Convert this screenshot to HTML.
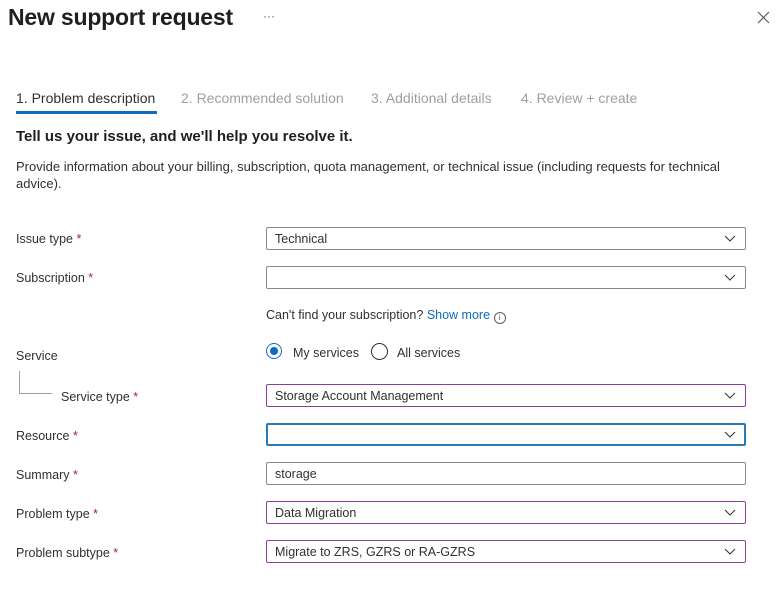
<!DOCTYPE html>
<html><head><style>
body{margin:0;width:783px;height:589px;background:#fff;font-family:"Liberation Sans",sans-serif;color:#323130;position:relative;overflow:hidden}
.a{position:absolute;white-space:nowrap}
.lbl{font-size:12.5px;color:#323130}
.req{color:#a4262c}
.box{position:absolute;left:266px;height:21px;border:1px solid #8a8886;border-radius:2px;font-size:12.5px;line-height:22px;padding-left:8px;box-sizing:content-box;width:470px}
.purple{border-color:#8a3d9a}
.blue{border:2px solid #2b79b5;height:19px;line-height:20px;width:469px;padding-left:7px}
.chev{position:absolute;right:9px;top:7px}
</style></head><body>
<div class="a" style="left:8px;top:4px;font-size:23px;font-weight:bold;color:#201f1e;letter-spacing:-0.2px">New support request</div>
<div class="a" style="left:263px;top:9px;font-size:12px;color:#605e5c">···</div>
<svg class="a" style="left:757px;top:11px" width="13" height="13"><path d="M1 1L12 12M12 1L1 12" stroke="#605e5c" stroke-width="1.2"/></svg>
<div class="a" style="left:16px;top:90px;font-size:14px;color:#323130">1. Problem description</div>
<div class="a" style="left:16px;top:111px;width:141px;height:3px;background:#0f6cbd"></div>
<div class="a" style="left:181px;top:90px;font-size:14px;color:#a19f9d">2. Recommended solution</div>
<div class="a" style="left:371px;top:90px;font-size:14px;color:#a19f9d">3. Additional details</div>
<div class="a" style="left:521px;top:90px;font-size:14px;color:#a19f9d">4. Review + create</div>
<div class="a" style="left:16px;top:128px;font-size:15px;font-weight:bold;color:#201f1e">Tell us your issue, and we'll help you resolve it.</div>
<div class="a" style="left:16px;top:158px;font-size:13px;line-height:17px;color:#323130">Provide information about your billing, subscription, quota management, or technical issue (including requests for technical<br>advice).</div>

<div class="a lbl" style="left:16px;top:232px">Issue type <span class="req">*</span></div>
<div class="box" style="top:227px">Technical<svg class="chev" width="12" height="8"><path d="M1 1L6 6L11 1" stroke="#323130" fill="none"/></svg></div>
<div class="a lbl" style="left:16px;top:271px">Subscription <span class="req">*</span></div>
<div class="box" style="top:266px"><svg class="chev" width="12" height="8"><path d="M1 1L6 6L11 1" stroke="#323130" fill="none"/></svg></div>
<div class="a lbl" style="left:266px;top:308px">Can't find your subscription? <span style="color:#0f6cbd">Show more</span> <span style="display:inline-block;width:10px;height:10px;border:1px solid #605e5c;border-radius:50%;font-size:8px;line-height:10px;text-align:center;color:#605e5c;vertical-align:-1px">i</span></div>
<div class="a lbl" style="left:16px;top:349px">Service</div>
<div class="a" style="left:19px;top:371px;width:32px;height:22px;border-left:1px solid #a19f9d;border-bottom:1px solid #a19f9d"></div>
<div class="a" style="left:266px;top:343px;width:16px;height:16px;border:1px solid #0f6cbd;border-radius:50%;box-sizing:border-box"></div>
<div class="a" style="left:270px;top:347px;width:8px;height:8px;background:#0f6cbd;border-radius:50%"></div>
<div class="a lbl" style="left:293px;top:346px">My services</div>
<div class="a" style="left:371px;top:343px;width:17px;height:17px;border:1px solid #323130;border-radius:50%;box-sizing:border-box"></div>
<div class="a lbl" style="left:397px;top:346px">All services</div>
<div class="a lbl" style="left:61px;top:390px">Service type <span class="req">*</span></div>
<div class="box purple" style="top:384px">Storage Account Management<svg class="chev" width="12" height="8"><path d="M1 1L6 6L11 1" stroke="#323130" fill="none"/></svg></div>
<div class="a lbl" style="left:16px;top:429px">Resource <span class="req">*</span></div>
<div class="box blue" style="top:423px"><svg class="chev" style="top:6px;right:8px" width="12" height="8"><path d="M1 1L6 6L11 1" stroke="#323130" fill="none"/></svg></div>
<div class="a lbl" style="left:16px;top:468px">Summary <span class="req">*</span></div>
<div class="box" style="top:462px">storage</div>
<div class="a lbl" style="left:16px;top:507px">Problem type <span class="req">*</span></div>
<div class="box purple" style="top:501px">Data Migration<svg class="chev" width="12" height="8"><path d="M1 1L6 6L11 1" stroke="#323130" fill="none"/></svg></div>
<div class="a lbl" style="left:16px;top:546px">Problem subtype <span class="req">*</span></div>
<div class="box purple" style="top:540px">Migrate to ZRS, GZRS or RA-GZRS<svg class="chev" width="12" height="8"><path d="M1 1L6 6L11 1" stroke="#323130" fill="none"/></svg></div>
</body></html>
